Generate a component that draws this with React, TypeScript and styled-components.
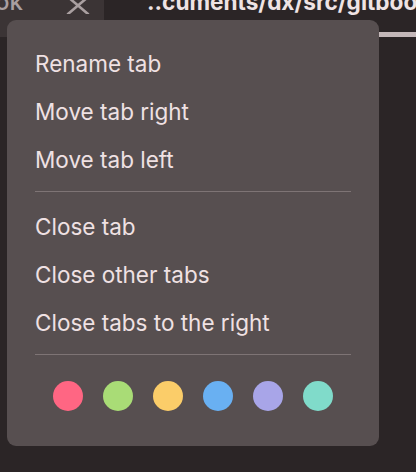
import React from "react";
import styled, { createGlobalStyle } from "styled-components";

const Global = createGlobalStyle`
  html, body { margin: 0; padding: 0; background: #2b2526; }
  body { font-family: Inter, "Noto Sans", sans-serif; -webkit-font-smoothing: antialiased; }
`;

const Screen = styled.div`
  position: relative;
  width: 416px;
  height: 472px;
  overflow: hidden;
  background: #2b2526;
`;

const TopBar = styled.div`
  display: flex;
  height: 37px;
  align-items: stretch;
`;

const Tab = styled.div`
  display: flex;
  align-items: flex-start;
  width: 104px;
  flex: none;
  background: #3b3435;
  overflow: hidden;
`;

const TabLabel = styled.span`
  margin-left: -5px;
  margin-top: -13px;
  font-size: 24px;
  line-height: 30px;
  color: #a99fa0;
  font-weight: 500;
`;

const TabClose = styled.svg`
  margin-left: 43px;
  margin-top: -3px;
  flex: none;
`;

const TitleArea = styled.div`
  flex: 1;
  display: flex;
  flex-direction: column;
  justify-content: space-between;
  overflow: hidden;
`;

const PathText = styled.div`
  margin-left: 43px;
  margin-top: -12px;
  font-size: 22.6px;
  line-height: 28px;
  font-weight: 700;
  color: #efe3e4;
  white-space: nowrap;
`;

const Indicator = styled.div`
  height: 5px;
  background: #c4b8b9;
`;

const Menu = styled.div`
  position: absolute;
  left: 7px;
  top: 20px;
  width: 372px;
  box-sizing: border-box;
  padding: 19px 28px 35px;
  background: #574f50;
  border-radius: 9px;
  display: flex;
  flex-direction: column;
`;

const Item = styled.div`
  height: 48px;
  display: flex;
  align-items: center;
  font-size: 22.5px;
  color: #efe1e3;
`;

const Separator = styled.div`
  height: 1px;
  background: #7e7475;
  margin: 8px 0 10px;
`;

const DotRow = styled.div`
  display: flex;
  justify-content: center;
  gap: 20px;
  padding-top: 16px;
`;

const Dot = styled.div<{ $color: string }>`
  width: 30px;
  height: 30px;
  border-radius: 50%;
  background: ${(p) => p.$color};
`;

const groups = [
  ["Rename tab", "Move tab right", "Move tab left"],
  ["Close tab", "Close other tabs", "Close tabs to the right"],
];

const colors = ["#ff6683", "#a9dc76", "#fbcd69", "#69b0f2", "#a8a5e8", "#80dbca"];

export default function App() {
  return (
    <Screen>
      <Global />
      <TopBar>
        <Tab>
          <TabLabel>ok</TabLabel>
          <TabClose width="24" height="17" viewBox="0 0 24 17">
            <path d="M2 0 L22 17 M22 0 L2 17" stroke="#a99fa0" strokeWidth="2.6" strokeLinecap="round" />
          </TabClose>
        </Tab>
        <TitleArea>
          <PathText>..cuments/dx/src/gitbook</PathText>
          <Indicator />
        </TitleArea>
      </TopBar>
      <Menu>
        {groups.map((g, i) => (
          <React.Fragment key={i}>
            {g.map((label) => (
              <Item key={label}>{label}</Item>
            ))}
            <Separator />
          </React.Fragment>
        ))}
        <DotRow>
          {colors.map((c) => (
            <Dot key={c} $color={c} />
          ))}
        </DotRow>
      </Menu>
    </Screen>
  );
}
